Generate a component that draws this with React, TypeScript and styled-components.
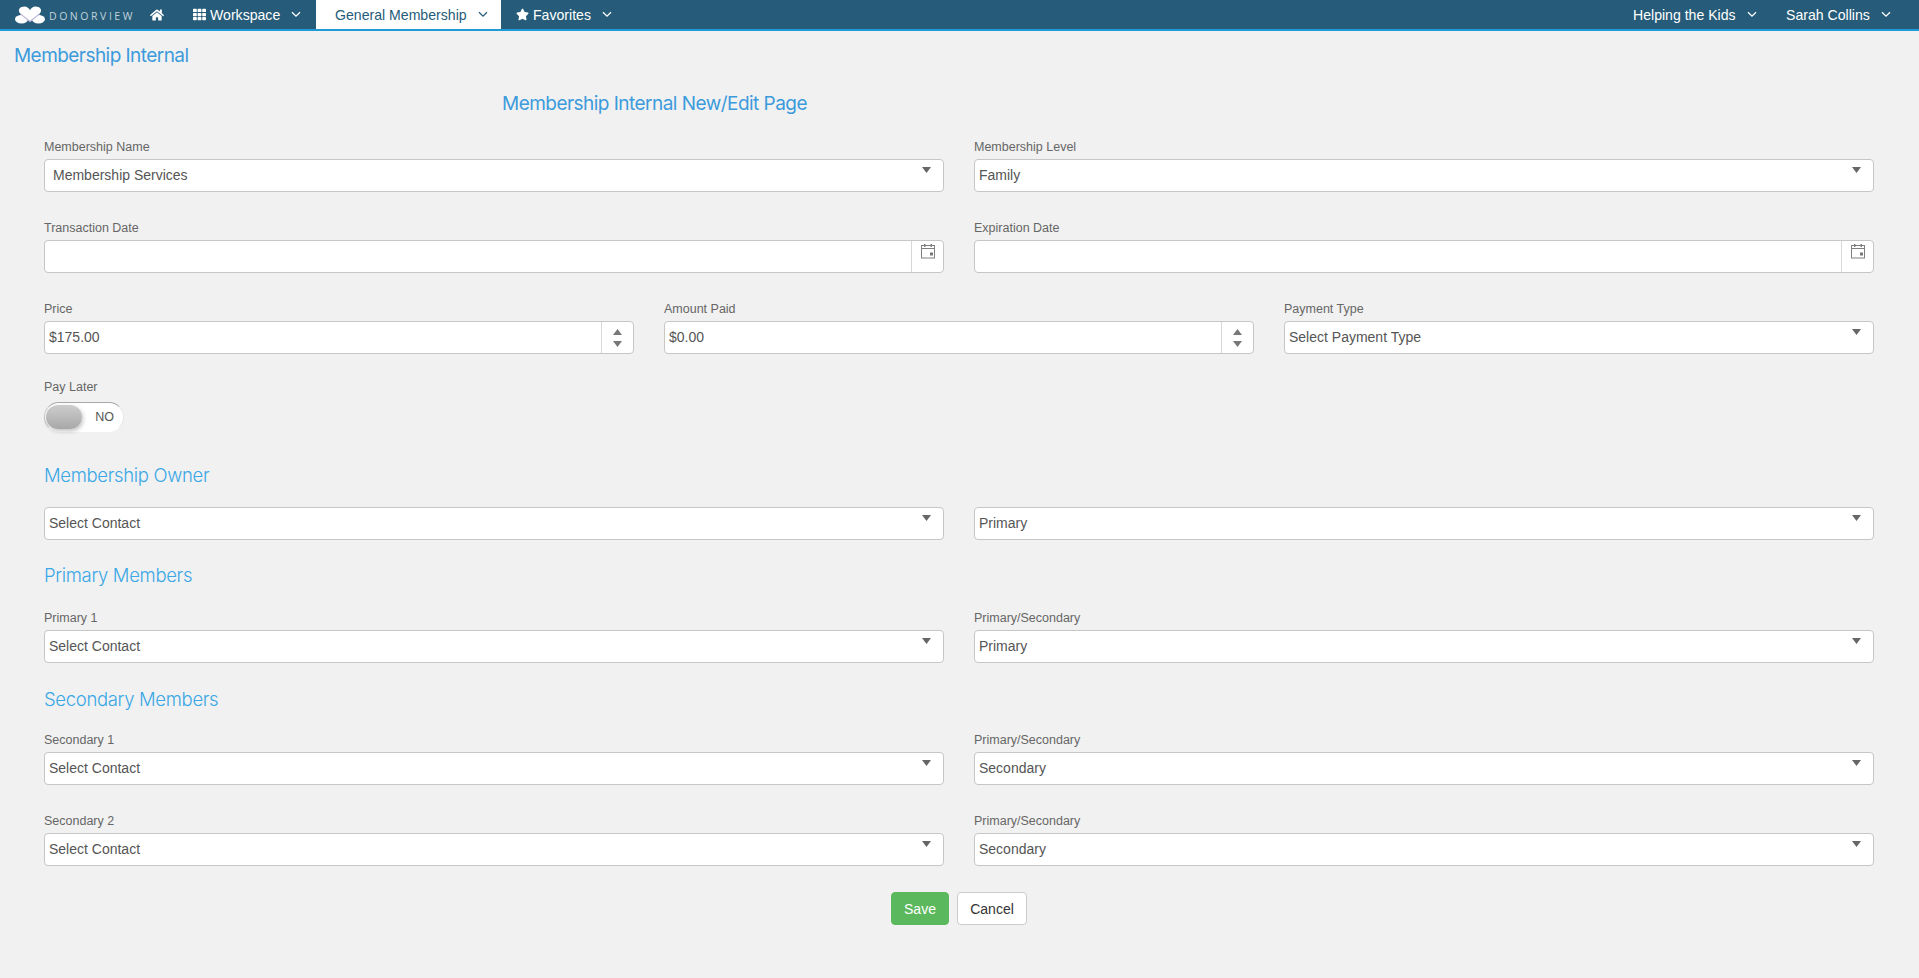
import React, { FC } from 'react';
import styled, { createGlobalStyle } from 'styled-components';
import { FaHome, FaStar, FaTh } from 'react-icons/fa';

const GlobalStyle = createGlobalStyle`
    html, body {
        margin: 0;
        padding: 0;
        background: #f1f1f1;
        font-family: 'Liberation Sans', Arial, sans-serif;
    }
    * {
        box-sizing: border-box;
    }
`;

const Page = styled.div`
    width: 100%;
    height: 978px;
    overflow: hidden;
    background: #f1f1f1;
`;

const NavBar = styled.nav`
    display: flex;
    align-items: stretch;
    height: 31px;
    background: #265c79;
    border-bottom: 2px solid #1f9ad6;
`;

const NavGroup = styled.div`
    display: flex;
    align-items: stretch;
`;

const RightGroup = styled(NavGroup)`
    margin-left: auto;
`;

const Logo = styled.div`
    display: flex;
    align-items: center;
    width: 135px;
    padding-left: 15px;
    gap: 4px;
`;

const LogoText = styled.span`
    font-family: 'Open Sans', sans-serif;
    font-size: 10.5px;
    letter-spacing: 2.55px;
    color: #c2d3dc;
    margin-top: 2px;
`;

const NavItem = styled.div<{ $active?: boolean; $width: number; $pad?: number }>`
    display: flex;
    align-items: center;
    width: ${(p) => p.$width}px;
    height: ${(p) => (p.$active ? '31px' : '29px')};
    padding-left: ${(p) => p.$pad ?? 0}px;
    font-size: 14.1px;
    color: ${(p) => (p.$active ? '#265c79' : '#ffffff')};
    background: ${(p) => (p.$active ? '#ffffff' : 'transparent')};
    ${(p) => p.$active && 'border-bottom: 2px solid #1f9ad6;'}
    white-space: nowrap;
`;

const NavIcon = styled.span`
    display: inline-flex;
    margin-right: 4px;
    font-size: 13px;
`;

const Chevron = styled.svg`
    width: 10px;
    height: 7px;
    margin-left: 11px;
    flex: none;
`;

const NavChevron: FC = () => (
    <Chevron viewBox="0 0 10 7">
        <path d="M1 1.2 L5 5.2 L9 1.2" fill="none" stroke="currentColor" strokeWidth="1.3" />
    </Chevron>
);

const PageTitle = styled.h1`
    margin: 0;
    padding: 14px 0 0 14px;
    height: 38px;
    font-family: Inter, 'Liberation Sans', sans-serif;
    font-size: 19px;
    line-height: 22px;
    font-weight: 400;
    letter-spacing: -0.55px;
    color: #3c9bdc;
`;

const FormTitle = styled.h2`
    margin: 0;
    padding: 23px 0 0 502px;
    height: 71px;
    font-family: Inter, 'Liberation Sans', sans-serif;
    font-size: 19px;
    line-height: 24px;
    font-weight: 400;
    letter-spacing: -0.53px;
    color: #3c9bdc;
`;

const Form = styled.form`
    padding: 0 45px 0 44px;
`;

const Row = styled.div<{ $cols: number; $bottom: number }>`
    display: grid;
    grid-template-columns: repeat(${(p) => p.$cols}, 1fr);
    column-gap: 30px;
    margin-bottom: ${(p) => p.$bottom}px;
`;

const Label = styled.label`
    display: block;
    height: 14px;
    margin-bottom: 5px;
    font-size: 12.5px;
    line-height: 14px;
    color: #666666;
`;

const Box = styled.div`
    position: relative;
    display: flex;
    align-items: center;
    height: 33px;
    background: #ffffff;
    border: 1px solid #c6c6c6;
    border-radius: 4px;
`;

const BoxText = styled.span<{ $pad: number }>`
    flex: 1;
    padding-left: ${(p) => p.$pad - 1}px;
    padding-bottom: 1px;
    font-size: 14px;
    color: #555555;
`;

const Arrow = styled.svg`
    position: absolute;
    top: 7px;
    right: 12px;
    width: 9px;
    height: 6px;
`;

const AddOn = styled.div`
    display: flex;
    flex-direction: column;
    align-items: center;
    justify-content: center;
    width: 32px;
    height: 100%;
    border-left: 1px solid #d8d8d8;
`;

const CalendarAddOn = styled(AddOn)`
    justify-content: flex-start;
    padding-top: 2px;
`;

const SpinAddOn = styled(AddOn)`
    gap: 6px;
`;

const SpinArrow = styled.svg`
    width: 9px;
    height: 6px;
`;

const CalendarIcon: FC = () => (
    <svg width="16" height="16" viewBox="0 0 16 16">
        <rect x="1.5" y="2.5" width="13" height="12.5" fill="none" stroke="#808080" strokeWidth="1" />
        <rect x="1.5" y="5" width="13" height="1" fill="#808080" />
        <rect x="4" y="1" width="1.5" height="3" fill="#808080" />
        <rect x="10.5" y="1" width="1.5" height="3" fill="#808080" />
        <rect x="10" y="9.5" width="3" height="3" fill="#777777" />
    </svg>
);

const Select: FC<{ text: string; pad?: number }> = ({ text, pad = 5 }) => (
    <Box>
        <BoxText $pad={pad}>{text}</BoxText>
        <Arrow viewBox="0 0 9 6">
            <path d="M0 0 H9 L4.5 6 Z" fill="#666666" />
        </Arrow>
    </Box>
);

const DateInput: FC = () => (
    <Box>
        <BoxText $pad={5} />
        <CalendarAddOn>
            <CalendarIcon />
        </CalendarAddOn>
    </Box>
);

const NumberInput: FC<{ text: string }> = ({ text }) => (
    <Box>
        <BoxText $pad={5}>{text}</BoxText>
        <SpinAddOn>
            <SpinArrow viewBox="0 0 9 6">
                <path d="M0 6 H9 L4.5 0 Z" fill="#777777" />
            </SpinArrow>
            <SpinArrow viewBox="0 0 9 6">
                <path d="M0 0 H9 L4.5 6 Z" fill="#777777" />
            </SpinArrow>
        </SpinAddOn>
    </Box>
);

const Toggle = styled.div`
    position: relative;
    display: flex;
    align-items: center;
    justify-content: flex-end;
    width: 80px;
    height: 30px;
    margin-top: 8px;
    padding-right: 9px;
    background: #ffffff;
    border-radius: 15px;
    border: 1px solid;
    border-color: #a8a8a8 #e6e6e6 #ffffff #c8c8c8;
    font-size: 12.5px;
    color: #555555;
`;

const Knob = styled.div`
    position: absolute;
    top: 2px;
    left: 1px;
    width: 36px;
    height: 24px;
    border-radius: 12px;
    background: linear-gradient(#cdcdcd, #a8a8a8);
    box-shadow: 1px 2px 4px rgba(0, 0, 0, 0.25);
`;

const SectionTitle = styled.h3<{ $bottom: number }>`
    margin: 0 0 ${(p) => p.$bottom}px;
    height: 24px;
    font-family: Inter, 'Liberation Sans', sans-serif;
    font-size: 18.5px;
    line-height: 24px;
    font-weight: 300;
    letter-spacing: -0.33px;
    color: #3aa7e6;
`;

const Actions = styled.div`
    display: flex;
    gap: 8px;
    padding-left: 847px;
`;

const Button = styled.button<{ $primary?: boolean }>`
    height: 33px;
    width: ${(p) => (p.$primary ? 58 : 70)}px;
    padding: 0;
    font-family: inherit;
    font-size: 14px;
    color: ${(p) => (p.$primary ? '#ffffff' : '#333333')};
    background: ${(p) => (p.$primary ? '#5cb85c' : '#ffffff')};
    border: 1px solid ${(p) => (p.$primary ? '#5cb85c' : '#cccccc')};
    border-radius: 4px;
`;

const App: FC = () => (
    <Page>
        <GlobalStyle />
        <NavBar>
            <NavGroup>
                <Logo>
                    <svg width="31" height="18" viewBox="0 0 32 18">
                        <ellipse cx="7" cy="13.5" rx="7" ry="4.5" fill="#ffffff" />
                        <ellipse cx="25" cy="13.5" rx="7" ry="4.5" fill="#ffffff" />
                        <path d="M16 16 L5.5 7.5 C2 3 6 0 10 0 C13 0 15 2 16 4 C17 2 19 0 22 0 C26 0 30 3 26.5 7.5 Z" fill="#ffffff" />
                        <path d="M5.5 7.5 L16 16 L26.5 7.5" fill="none" stroke="#b7b3d6" strokeWidth="1.2" />
                    </svg>
                    <LogoText>DONORVIEW</LogoText>
                </Logo>
                <NavItem $width={43} $pad={15}>
                    <FaHome size={14} />
                </NavItem>
                <NavItem $width={138} $pad={15}>
                    <NavIcon><FaTh size={13} /></NavIcon>
                    Workspace
                    <NavChevron />
                </NavItem>
                <NavItem $active $width={185} $pad={19}>
                    General Membership
                    <NavChevron />
                </NavItem>
                <NavItem $width={130} $pad={15}>
                    <NavIcon><FaStar size={13} /></NavIcon>
                    Favorites
                    <NavChevron />
                </NavItem>
            </NavGroup>
            <RightGroup>
                <NavItem $width={153}>
                    Helping the Kids
                    <NavChevron />
                </NavItem>
                <NavItem $width={133}>
                    Sarah Collins
                    <NavChevron />
                </NavItem>
            </RightGroup>
        </NavBar>
        <PageTitle>Membership Internal</PageTitle>
        <FormTitle>Membership Internal New/Edit Page</FormTitle>
        <Form>
            <Row $cols={2} $bottom={29}>
                <div>
                    <Label>Membership Name</Label>
                    <Select text="Membership Services" pad={9} />
                </div>
                <div>
                    <Label>Membership Level</Label>
                    <Select text="Family" />
                </div>
            </Row>
            <Row $cols={2} $bottom={29}>
                <div>
                    <Label>Transaction Date</Label>
                    <DateInput />
                </div>
                <div>
                    <Label>Expiration Date</Label>
                    <DateInput />
                </div>
            </Row>
            <Row $cols={3} $bottom={26}>
                <div>
                    <Label>Price</Label>
                    <NumberInput text="$175.00" />
                </div>
                <div>
                    <Label>Amount Paid</Label>
                    <NumberInput text="$0.00" />
                </div>
                <div>
                    <Label>Payment Type</Label>
                    <Select text="Select Payment Type" />
                </div>
            </Row>
            <Row $cols={1} $bottom={31}>
                <div>
                    <Label>Pay Later</Label>
                    <Toggle>
                        <Knob />
                        NO
                    </Toggle>
                </div>
            </Row>
            <SectionTitle $bottom={20}>Membership Owner</SectionTitle>
            <Row $cols={2} $bottom={23}>
                <Select text="Select Contact" />
                <Select text="Primary" />
            </Row>
            <SectionTitle $bottom={24}>Primary Members</SectionTitle>
            <Row $cols={2} $bottom={24}>
                <div>
                    <Label>Primary 1</Label>
                    <Select text="Select Contact" />
                </div>
                <div>
                    <Label>Primary/Secondary</Label>
                    <Select text="Primary" />
                </div>
            </Row>
            <SectionTitle $bottom={22}>Secondary Members</SectionTitle>
            <Row $cols={2} $bottom={29}>
                <div>
                    <Label>Secondary 1</Label>
                    <Select text="Select Contact" />
                </div>
                <div>
                    <Label>Primary/Secondary</Label>
                    <Select text="Secondary" />
                </div>
            </Row>
            <Row $cols={2} $bottom={26}>
                <div>
                    <Label>Secondary 2</Label>
                    <Select text="Select Contact" />
                </div>
                <div>
                    <Label>Primary/Secondary</Label>
                    <Select text="Secondary" />
                </div>
            </Row>
            <Actions>
                <Button $primary type="button">Save</Button>
                <Button type="button">Cancel</Button>
            </Actions>
        </Form>
    </Page>
);

export default App;
